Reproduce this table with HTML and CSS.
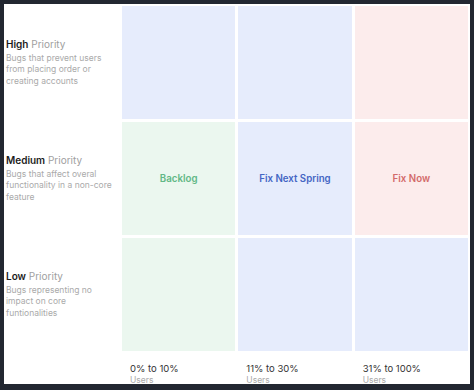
FILE: index.html
```html
<!DOCTYPE html>
<html lang="en">
<head>
  <meta charset="UTF-8" />
  <meta name="viewport" content="width=device-width, initial-scale=1" />
  <title>Bug Priority Matrix</title>
  <link rel="stylesheet" href="styles.css">
</head>
<body>
  <div class="board">
    <!-- High -->
    <div class="label">
      <h3><strong>High</strong> Priority</h3>
      <p>Bugs that prevent users from placing order or creating accounts</p>
    </div>
    <div class="cell blue"></div>
    <div class="cell blue"></div>
    <div class="cell red"></div>

    <!-- Medium -->
    <div class="label">
      <h3><strong>Medium</strong> Priority</h3>
      <p>Bugs that affect overal functionality in a non-core feature</p>
    </div>
    <div class="cell green"><span>Backlog</span></div>
    <div class="cell blue"><span>Fix Next Spring</span></div>
    <div class="cell red"><span>Fix Now</span></div>

    <!-- Low -->
    <div class="label">
      <h3><strong>Low</strong> Priority</h3>
      <p>Bugs representing no impact on core funtionalities</p>
    </div>
    <div class="cell green"></div>
    <div class="cell blue"></div>
    <div class="cell blue"></div>

    <!-- Users axis -->
    <div></div>
    <div class="range"><b>0% to 10%</b><span>Users</span></div>
    <div class="range"><b>11% to 30%</b><span>Users</span></div>
    <div class="range"><b>31% to 100%</b><span>Users</span></div>
  </div>
</body>
</html>
```
FILE: styles.css
```css
body {
  margin: 0;
  padding: 4px 4px 0;
  background: #222731;
  font-family: 'Inter', sans-serif;
}

.board {
  height: 380px;
  overflow: hidden;
  background: #fff;
  padding: 2px;
  box-sizing: border-box;
  display: grid;
  grid-template-columns: 113px repeat(3, 1fr);
  grid-template-rows: repeat(3, 113px) auto;
  gap: 3px;
}

.label {
  display: flex;
  flex-direction: column;
  justify-content: center;
  padding-right: 2px;
}

.label h3 {
  margin: 0 0 3px;
  font-size: 10px;
  font-weight: 400;
  color: #a0a0a0;
}

.label h3 strong {
  font-weight: 600;
  color: #1c1c1c;
}

.label p {
  margin: 0;
  font-size: 8.5px;
  line-height: 11.5px;
  color: #aaa;
}

.cell {
  display: flex;
  align-items: center;
  justify-content: center;
  font-size: 9.7px;
  font-weight: 600;
}

.blue {
  background: #e6ecfc;
  color: #4466c4;
}

.green {
  background: #ebf7ef;
  color: #62b886;
}

.red {
  background: #fcecec;
  color: #d36a6a;
}

.range {
  padding: 9px 0 0 8px;
  display: flex;
  flex-direction: column;
}

.range b {
  font-size: 9.5px;
  line-height: 12px;
  font-weight: 400;
  color: #333;
}

.range span {
  font-size: 8.5px;
  line-height: 11px;
  color: #aaa;
}
```
